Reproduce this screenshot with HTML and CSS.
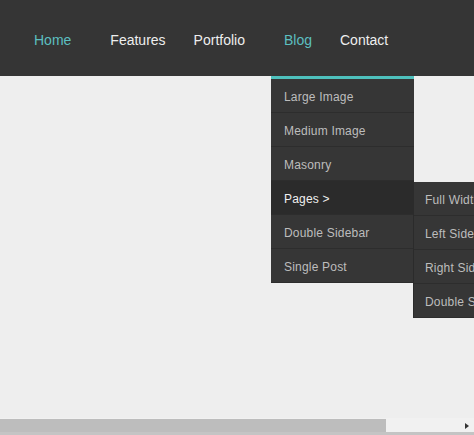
FILE: index.html
```html
<!DOCTYPE html>
<html lang="en">
<head>
    <meta charset="UTF-8">
    <title>menu</title>
    <link rel="stylesheet" href="styles.css">
</head>
<body>
    <div class="header">
        <ul class="nav">
            <li class="nav_item item_home active"><a href="#">Home</a></li>
            <li class="nav_item item_features"><a href="#">Features</a></li>
            <li class="nav_item item_portfolio"><a href="#">Portfolio</a></li>
            <li class="nav_item item_blog active">
                <a href="#">Blog</a>
                <ul class="drop">
                    <li><a href="#">Large Image</a></li>
                    <li><a href="#">Medium Image</a></li>
                    <li><a href="#">Masonry</a></li>
                    <li class="has_sub current">
                        <a href="#">Pages &gt;</a>
                        <ul class="drop sub">
                            <li><a href="#">Full Width</a></li>
                            <li><a href="#">Left Sidebar</a></li>
                            <li><a href="#">Right Sidebar</a></li>
                            <li><a href="#">Double Sidebar</a></li>
                        </ul>
                    </li>
                    <li><a href="#">Double Sidebar</a></li>
                    <li><a href="#">Single Post</a></li>
                </ul>
            </li>
            <li class="nav_item item_contact"><a href="#">Contact</a></li>
        </ul>
    </div>
    <div class="scrollbar">
        <div class="thumb"></div>
        <div class="arrow"></div>
    </div>
</body>
</html>
```

FILE: styles.css
```css
html, body {
    margin: 0;
    padding: 0;
    height: 100%;
    overflow: hidden;
}
body {
    background: #eeeeee;
    font-family: "Liberation Sans", Arial, sans-serif;
    position: relative;
}
ul {
    list-style: none;
    margin: 0;
    padding: 0;
}
a {
    text-decoration: none;
}
.header {
    height: 76px;
    background: #353535;
}
.nav {
    display: flex;
    height: 76px;
}
.nav_item {
    position: relative;
    display: flex;
    align-items: center;
}
.nav_item > a {
    color: #eeeeee;
    font-size: 14px;
    line-height: 16px;
    padding-top: 4px;
}
.nav_item.active > a {
    color: #5cbfc0;
}
.item_home {
    margin-left: 34px;
}
.item_features {
    margin-left: 39px;
}
.item_portfolio {
    margin-left: 28px;
}
.item_blog {
    margin-left: 39px;
}
.item_contact {
    margin-left: 28px;
}
.drop {
    position: absolute;
    top: 76px;
    left: -13px;
    width: 143px;
    background: #363636;
    border-top: 3px solid #4ec1bd;
    z-index: 2;
}
.drop li {
    position: relative;
    border-bottom: 1px solid #2d2d2d;
}
.drop a {
    display: block;
    height: 30px;
    padding-top: 3px;
    line-height: 30px;
    padding-left: 13px;
    color: #bdbdbd;
    font-size: 12px;
    letter-spacing: 0.2px;
    white-space: nowrap;
}
.drop li.current {
    background: #2b2b2b;
}
.drop li.current > a {
    color: #f0f0f0;
}
.sub {
    top: 1px;
    left: 142px;
    border-top: none;
    border-left: 1px solid #2b2b2b;
}
.sub a {
    padding-left: 11px;
}
.scrollbar {
    position: absolute;
    left: 0;
    right: 0;
    bottom: 0;
    height: 17px;
    background: #f1f1f1;
    border-bottom: 3px solid #c4c4c4;
    box-sizing: border-box;
}
.thumb {
    position: absolute;
    left: 0;
    top: 1px;
    width: 386px;
    height: 13px;
    background: #bdbdbd;
}
.arrow {
    position: absolute;
    right: 5px;
    top: 5px;
    width: 0;
    height: 0;
    border-top: 3px solid transparent;
    border-bottom: 3px solid transparent;
    border-left: 4px solid #333;
}
```
